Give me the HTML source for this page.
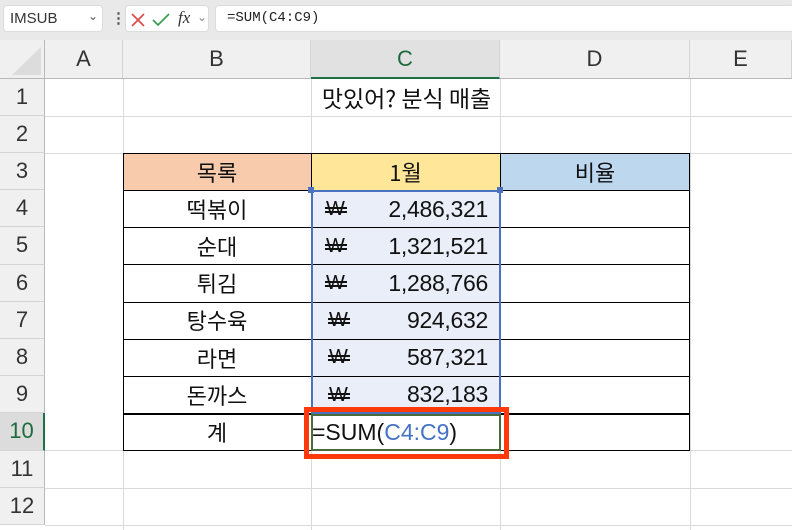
<!DOCTYPE html>
<html><head><meta charset="utf-8"><style>
*{margin:0;padding:0;box-sizing:border-box}
body{width:792px;height:530px;overflow:hidden;background:#fff;position:relative;font-family:"Liberation Sans","Noto Sans CJK KR",sans-serif}
.a{position:absolute}
.top{left:0;top:0;width:792px;height:40px;background:#e9e9e9}
.box{background:#fff;border-radius:4px;border:1px solid #dcdcdc}
.hdr{top:40px;height:39px;background:#f0f0f0;border-bottom:1px solid #b8b8b8;border-right:1px solid #d4d4d4;font-size:22px;color:#333;display:flex;align-items:center;justify-content:center}
.rh{left:0;width:45px;height:37.2px;background:#f0f0f0;border-bottom:1px solid #d4d4d4;border-right:1px solid #b8b8b8;font-size:22px;color:#333;display:flex;align-items:center;justify-content:center}
.vl{top:79px;width:1px;height:451px;background:#dadada}
.hl{left:45px;width:747px;height:1px;background:#dadada}
.c{font-size:22px;color:#111;display:flex;align-items:center;justify-content:center;font-family:"Noto Sans CJK KR","Liberation Sans",sans-serif}
.bk{background:#000}
.num{font-size:23px;color:#111;font-family:"Liberation Sans",sans-serif;text-align:right;letter-spacing:-0.3px}
.w{position:absolute;width:20px;height:20px;font-size:20px;line-height:20px;color:#111;font-family:"Liberation Sans",sans-serif}
.w:before,.w:after{content:"";position:absolute;left:-1px;width:22px;height:1.5px;background:#111}
.w:before{top:8px}.w:after{top:12px}
</style></head><body>
<div class="a top"></div>
<div class="a box" style="left:3px;top:5px;width:100px;height:27px;font-size:15px;color:#333;padding:4px 0 0 6px">IMSUB<span class="a" style="left:84px;top:3px;font-size:12px;color:#555">&#8964;</span></div>
<div class="a" style="left:111px;top:9px;font-size:15px;color:#555;font-weight:bold">&#8942;</div>
<div class="a box" style="left:125px;top:5px;width:84px;height:27px">
<svg class="a" style="left:4px;top:6px" width="16" height="16"><path d="M2 2L14 14M14 2L2 14" stroke="#e04848" stroke-width="1.6"/></svg>
<svg class="a" style="left:26px;top:6px" width="18" height="16"><path d="M1 8L6 13L17 2" stroke="#2e9a4a" stroke-width="1.6" fill="none"/></svg>
<span class="a" style="left:52px;top:2px;font-family:'Liberation Serif',serif;font-style:italic;font-size:17px;color:#333">fx</span>
<span class="a" style="left:71px;top:4px;font-size:12px;color:#888">&#8964;</span>
</div>
<div class="a box" style="left:215px;top:5px;width:580px;height:27px;font-family:'Liberation Mono',monospace;font-size:14px;color:#222;padding:4px 0 0 11px">=SUM(C4:C9)</div>

<div class="a hdr" style="left:0;width:45px;border-right:1px solid #b8b8b8"><svg width="36" height="30" style="position:absolute;left:8px;top:5px"><path d="M33 2L33 30L4 30Z" fill="#dcdcdc"/></svg></div>
<div class="a hdr" style="left:45px;width:78px">A</div>
<div class="a hdr" style="left:123px;width:188px">B</div>
<div class="a hdr" style="left:311px;width:189px;background:#e1e1e1;color:#1e6b3c;border-bottom:2px solid #1e7145">C</div>
<div class="a hdr" style="left:500px;width:190px">D</div>
<div class="a hdr" style="left:690px;width:102px">E</div>

<div class="a rh" style="top:78.6px">1</div>
<div class="a rh" style="top:115.8px">2</div>
<div class="a rh" style="top:153px">3</div>
<div class="a rh" style="top:190.2px">4</div>
<div class="a rh" style="top:227.4px">5</div>
<div class="a rh" style="top:264.6px">6</div>
<div class="a rh" style="top:301.8px">7</div>
<div class="a rh" style="top:339px">8</div>
<div class="a rh" style="top:376.2px">9</div>
<div class="a rh" style="top:413.4px;background:#dcdcdc;color:#1e6b3c;border-right:2px solid #1e7145">10</div>
<div class="a rh" style="top:450.6px">11</div>
<div class="a rh" style="top:487.8px">12</div>

<div class="a vl" style="left:123px"></div><div class="a vl" style="left:311px"></div><div class="a vl" style="left:500px"></div><div class="a vl" style="left:690px"></div>
<div class="a hl" style="top:115.5px"></div><div class="a hl" style="top:152.7px"></div><div class="a hl" style="top:450.3px"></div><div class="a hl" style="top:487.5px"></div><div class="a hl" style="top:524.7px"></div>

<div class="a c" style="left:123px;top:78.6px;width:567px;height:37px;font-size:23px">맛있어? 분식 매출</div>

<div class="a" style="left:123px;top:153px;width:188px;height:37.2px;background:#f8cbad"></div>
<div class="a" style="left:311px;top:153px;width:189px;height:37.2px;background:#ffe699"></div>
<div class="a" style="left:500px;top:153px;width:190px;height:37.2px;background:#bdd7ee"></div>
<div class="a" style="left:311px;top:190.2px;width:189px;height:223.2px;background:#e9eef8"></div>
<div class="a bk" style="left:123px;top:153px;width:567px;height:1px"></div>
<div class="a bk" style="left:123px;top:190px;width:567px;height:1px"></div>
<div class="a bk" style="left:123px;top:227.2px;width:567px;height:1px"></div>
<div class="a bk" style="left:123px;top:264.4px;width:567px;height:1px"></div>
<div class="a bk" style="left:123px;top:301.6px;width:567px;height:1px"></div>
<div class="a bk" style="left:123px;top:338.8px;width:567px;height:1px"></div>
<div class="a bk" style="left:123px;top:376px;width:567px;height:1px"></div>
<div class="a bk" style="left:123px;top:412.5px;width:567px;height:2px"></div>
<div class="a bk" style="left:123px;top:450.3px;width:567px;height:1px"></div>
<div class="a bk" style="left:123px;top:153px;width:1px;height:298px"></div>
<div class="a bk" style="left:311px;top:153px;width:1px;height:298px"></div>
<div class="a bk" style="left:500px;top:153px;width:1px;height:298px"></div>
<div class="a bk" style="left:689px;top:153px;width:1px;height:298px"></div>
<div class="a" style="left:311px;top:189.5px;width:190px;height:224px;border:2px solid #4a72be"></div>
<div class="a" style="left:308px;top:187px;width:6px;height:6px;background:#4a72be"></div>
<div class="a" style="left:497px;top:187px;width:6px;height:6px;background:#4a72be"></div>

<div class="a c" style="left:123px;top:153px;width:188px;height:37px">목록</div>
<div class="a c" style="left:311px;top:153px;width:189px;height:37px">1월</div>
<div class="a c" style="left:500px;top:153px;width:190px;height:37px">비율</div>
<div class="a c" style="left:123px;top:190.2px;width:188px;height:37px">떡볶이</div>
<div class="a c" style="left:123px;top:227.4px;width:188px;height:37px">순대</div>
<div class="a c" style="left:123px;top:264.6px;width:188px;height:37px">튀김</div>
<div class="a c" style="left:123px;top:301.8px;width:188px;height:37px">탕수육</div>
<div class="a c" style="left:123px;top:339px;width:188px;height:37px">라면</div>
<div class="a c" style="left:123px;top:376.2px;width:188px;height:37px">돈까스</div>
<div class="a c" style="left:123px;top:413.4px;width:188px;height:37px">계</div>

<div class="w" style="left:326px;top:199px">W</div><div class="a num" style="left:340px;top:196px;width:148px">2,486,321</div>
<div class="w" style="left:326px;top:236px">W</div><div class="a num" style="left:340px;top:233px;width:148px">1,321,521</div>
<div class="w" style="left:326px;top:273px">W</div><div class="a num" style="left:340px;top:270px;width:148px">1,288,766</div>
<div class="w" style="left:329px;top:310px">W</div><div class="a num" style="left:340px;top:307px;width:148px">924,632</div>
<div class="w" style="left:329px;top:347px">W</div><div class="a num" style="left:340px;top:344px;width:148px">587,321</div>
<div class="w" style="left:329px;top:385px">W</div><div class="a num" style="left:340px;top:381px;width:148px">832,183</div>

<div class="a" style="left:311px;top:414px;width:190px;height:37px;border:2px solid #4b6b3a;background:#fff"></div>
<div class="a" style="left:304px;top:407px;width:205px;height:52px;border:5px solid #ff3a0a"></div>
<div class="a" style="left:312px;top:419px;font-size:23px;color:#111">=SUM(<span style="color:#4472c4">C4:C9</span>)</div>
</body></html>
